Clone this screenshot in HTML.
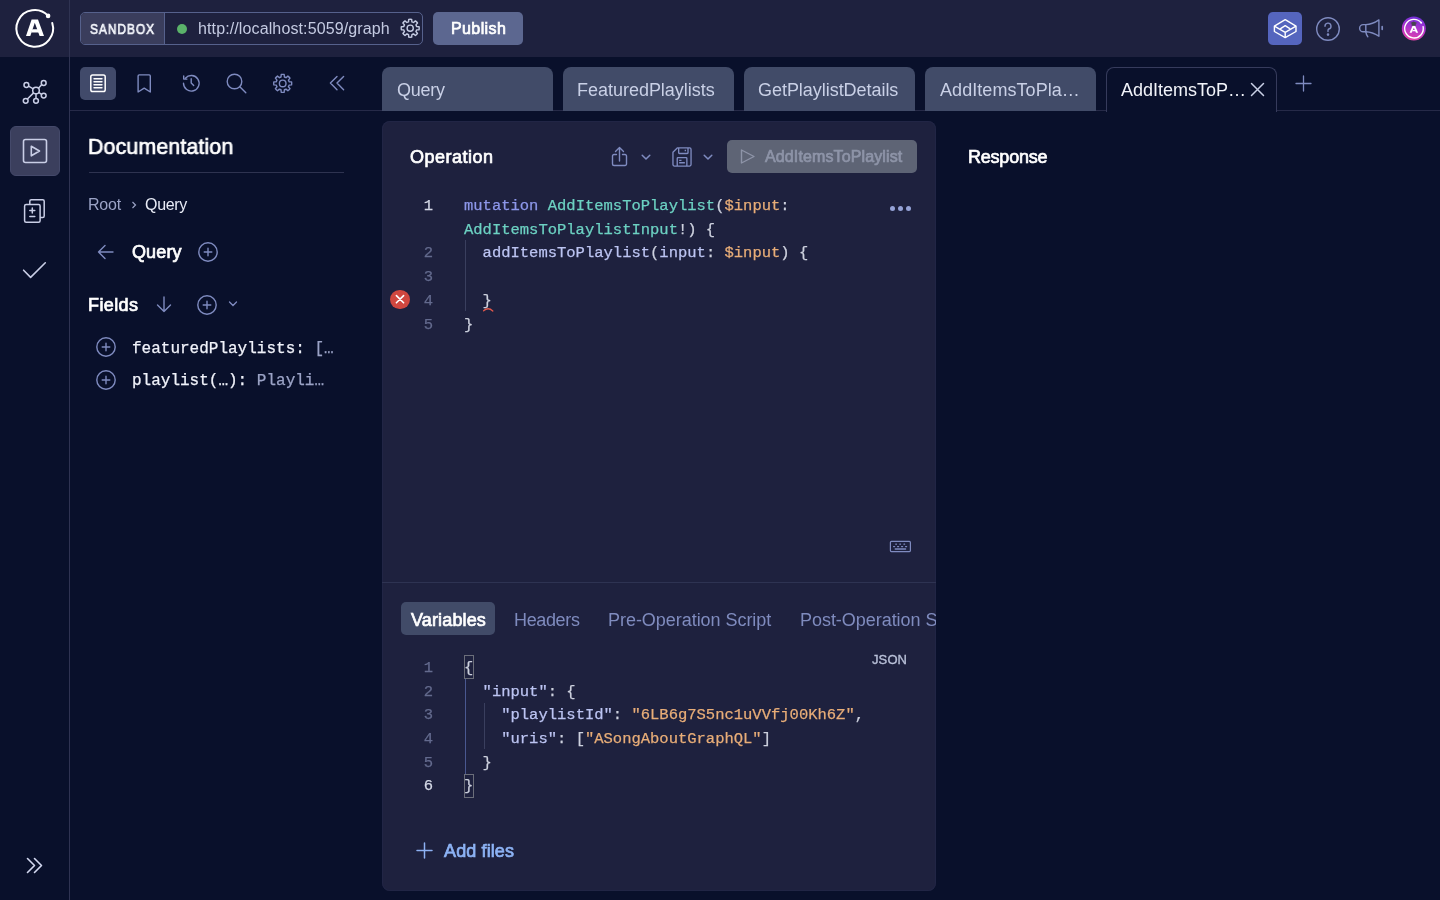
<!DOCTYPE html>
<html><head><meta charset="utf-8">
<style>
*{box-sizing:border-box;margin:0;padding:0}
html,body{width:1440px;height:900px;overflow:hidden;background:#09102B;font-family:"Liberation Sans",sans-serif}
.a{position:absolute}
.t{position:absolute;white-space:pre;line-height:0}
.m{font-family:"Liberation Mono",monospace}
.b{font-weight:normal;-webkit-text-stroke:0.7px currentColor}
svg{position:absolute;overflow:visible}
.t{will-change:transform}
.m{-webkit-text-stroke:0.25px currentColor}
</style></head><body>

<!-- top bar -->
<div class="a" style="left:0;top:0;width:1440px;height:57px;background:#1E213E"></div>
<!-- rail border -->
<div class="a" style="left:69px;top:0;width:1px;height:900px;background:#2F3352"></div>
<!-- secondary line -->
<div class="a" style="left:70px;top:110px;width:1370px;height:1px;background:#262A48"></div>

<!-- logo -->
<svg style="left:0;top:0" width="70" height="57" viewBox="0 0 70 57">
  <path d="M52.25 23.05 A18.3 18.3 0 1 1 48.13 15.92" fill="none" stroke="#fff" stroke-width="2" stroke-linecap="round"/>
  <circle cx="48.1" cy="15.9" r="2.3" fill="#fff"/>
  <path d="M26 36 L31.6 19.5 L38 19.5 L44 36 L39.6 36 L34.8 22.8 L30.3 36 Z" fill="#fff"/>
  <path d="M31.2 32.5 L40.3 32.5 L39.2 29.3 L32.3 29.3 Z" fill="#fff"/>
</svg>
<!-- url group -->
<div class="a" style="left:80px;top:12px;width:343px;height:33px;border:1px solid #56618C;border-radius:5px"></div>
<div class="a" style="left:81px;top:13px;width:84px;height:31px;background:#3A3D5C;border-right:1px solid #56618C;border-radius:4px 0 0 4px"></div>
<div class="t b" style="left:89.9px;top:29.3px;font-size:14px;letter-spacing:1.15px;transform:scaleX(0.85);transform-origin:0 0;color:#F2F4FA">SANDBOX</div>
<div class="a" style="left:177px;top:23.5px;width:10px;height:10px;border-radius:50%;background:#5BB36A"></div>
<div class="t" style="left:198.1px;top:28.7px;font-size:16px;letter-spacing:0.12px;color:#C5CBE2">http://localhost:5059/graph</div>
<!-- url gear -->
<svg style="left:398px;top:16px" width="25" height="25" viewBox="398 16 25 25" fill="none" stroke="#C5CBE2" stroke-width="1.4" stroke-linejoin="round">
  <path d="M408.51 21.82 L408.72 19.32 A9.0 9.0 0 0 1 411.68 19.32 L411.89 21.82 A6.6 6.6 0 0 1 413.51 22.49 L415.43 20.88 A9.0 9.0 0 0 1 417.52 22.97 L415.91 24.89 A6.6 6.6 0 0 1 416.58 26.51 L419.08 26.72 A9.0 9.0 0 0 1 419.08 29.68 L416.58 29.89 A6.6 6.6 0 0 1 415.91 31.51 L417.52 33.43 A9.0 9.0 0 0 1 415.43 35.52 L413.51 33.91 A6.6 6.6 0 0 1 411.89 34.58 L411.68 37.08 A9.0 9.0 0 0 1 408.72 37.08 L408.51 34.58 A6.6 6.6 0 0 1 406.89 33.91 L404.97 35.52 A9.0 9.0 0 0 1 402.88 33.43 L404.49 31.51 A6.6 6.6 0 0 1 403.82 29.89 L401.32 29.68 A9.0 9.0 0 0 1 401.32 26.72 L403.82 26.51 A6.6 6.6 0 0 1 404.49 24.89 L402.88 22.97 A9.0 9.0 0 0 1 404.97 20.88 L406.89 22.49 A6.6 6.6 0 0 1 408.51 21.82Z"/>
  <circle cx="410.2" cy="28.2" r="3.1"/>
</svg>
<!-- publish -->
<div class="a" style="left:433px;top:12px;width:90px;height:33px;border-radius:5px;background:#5C6790"></div>
<div class="t b" style="left:450.6px;top:28.7px;font-size:16px;letter-spacing:0.40px;color:#FFFFFF">Publish</div>


<!-- right icons -->
<div class="a" style="left:1268px;top:12px;width:34px;height:33px;border-radius:5px;background:#5565BE"></div>
<svg style="left:1266px;top:10px" width="40" height="38" viewBox="0 0 40 38" fill="none" stroke="#fff" stroke-width="1.4" stroke-linejoin="round">
  <path d="M8.4 16.2 L19.2 9.7 L30 16.2 L30 21.5 L19.2 27.6 L8.4 21.5 Z"/>
  <path d="M8.4 16.2 L19.2 22.4 L30 16.2 M19.2 22.4 V27.6"/>
  <path d="M14.2 18.8 L19.2 15.6 L24.2 18.8"/>
</svg>
<svg style="left:1316px;top:16.5px" width="24" height="24" viewBox="0 0 24 24" fill="none" stroke="#7F8BC0" stroke-width="1.4" stroke-linecap="round">
  <circle cx="12" cy="12" r="11.3"/>
  <path d="M9 9.2 A3 3 0 1 1 12.8 12 C12.2 12.3 12 12.8 12 13.6 V14.5"/>
  <circle cx="12" cy="17.6" r="0.6" fill="#7F8BC0"/>
</svg>
<svg style="left:1350px;top:10px" width="40" height="38" viewBox="1350 10 40 38" fill="none" stroke="#7F8BC0" stroke-width="1.4" stroke-linejoin="round" stroke-linecap="round">
  <path d="M1365.8 24.6 H1363.2 A3.55 3.55 0 0 0 1363.2 31.7 H1365.8 Z"/>
  <path d="M1365.8 24.6 C1371 24.4 1375 22.6 1378.9 19.9 V36.2 C1375 33.6 1371 31.9 1365.8 31.7"/>
  <path d="M1365.8 31.7 Q1366.2 35 1367.8 36.7"/>
  <path d="M1382.2 26.7 V29.3" stroke-width="1.7"/>
</svg>
<svg style="left:1400px;top:15px" width="28" height="28" viewBox="1400 15 28 28">
  <defs><linearGradient id="av" x1="0.6" y1="0" x2="0.4" y2="1"><stop offset="0" stop-color="#7030D8"/><stop offset="0.5" stop-color="#B034CC"/><stop offset="1" stop-color="#E444A8"/></linearGradient></defs>
  <circle cx="1413.8" cy="28.5" r="12" fill="url(#av)"/>
  <path d="M1422.97 26.18 A9.3 9.3 0 1 1 1421.18 22.73" fill="none" stroke="#fff" stroke-width="1.4"/>
  <circle cx="1421.2" cy="22.7" r="1" fill="#fff"/>
  <path d="M1409.6 32.7 L1412.6 25.8 L1415.1 25.8 L1418.1 32.7 L1416 32.7 L1413.85 27.7 L1411.7 32.7 Z" fill="#fff"/>
  <path d="M1412.3 31.3 L1416.1 31.3 L1415.6 30 L1412.8 30Z" fill="#fff"/>
  <path d="M1410.1 23 L1413.7 21.4 L1417.2 23 L1413.7 24.6 Z M1411.6 23.6 H1415.8 V25.8 H1411.6 Z" fill="#46444E"/>
</svg>

<!-- secondary toolbar -->
<div class="a" style="left:80px;top:67px;width:36px;height:33px;border-radius:5px;background:#414A6A"></div>
<svg style="left:85px;top:70px" width="26" height="26" viewBox="85 70 26 26" fill="none" stroke="#fff" stroke-width="1.5" stroke-linecap="round">
  <rect x="90.8" y="74.9" width="14.4" height="16.6" rx="1.8"/>
  <path d="M94 78.7 H102 M94 81.7 H102 M94 84.7 H102 M94 87.7 H102" stroke-width="1.4"/>
</svg>
<svg style="left:132px;top:70px" width="24" height="26" viewBox="132 70 24 26" fill="none" stroke="#7F8BC0" stroke-width="1.4" stroke-linejoin="round">
  <path d="M138.1 76 Q138.1 74.9 139.2 74.9 H149.2 Q150.3 74.9 150.3 76 V92 L144.2 88.2 L138.1 92 Z"/>
</svg>
<svg style="left:178px;top:70px" width="26" height="26" viewBox="178 70 26 26" fill="none" stroke="#7F8BC0" stroke-width="1.4" stroke-linecap="round" stroke-linejoin="round">
  <path d="M183.5 83.3 A7.8 7.8 0 1 0 185.4 78.2"/>
  <path d="M183.7 75.9 V79.1 H186.9"/>
  <path d="M191.2 78.8 V83 L193.7 85.5"/>
</svg>
<svg style="left:226px;top:73px" width="21" height="21" viewBox="0 0 21 21" fill="none" stroke="#7F8BC0" stroke-width="1.4" stroke-linecap="round">
  <circle cx="8.5" cy="8.5" r="7.3"/>
  <path d="M13.8 13.8 L19.8 19.8"/>
</svg>
<svg style="left:270px;top:71px" width="25" height="25" viewBox="270 71 25 25" fill="none" stroke="#7F8BC0" stroke-width="1.4" stroke-linejoin="round">
  <path d="M281.01 77.02 L281.22 74.52 A9.0 9.0 0 0 1 284.18 74.52 L284.39 77.02 A6.6 6.6 0 0 1 286.01 77.69 L287.93 76.08 A9.0 9.0 0 0 1 290.02 78.17 L288.41 80.09 A6.6 6.6 0 0 1 289.08 81.71 L291.58 81.92 A9.0 9.0 0 0 1 291.58 84.88 L289.08 85.09 A6.6 6.6 0 0 1 288.41 86.71 L290.02 88.63 A9.0 9.0 0 0 1 287.93 90.72 L286.01 89.11 A6.6 6.6 0 0 1 284.39 89.78 L284.18 92.28 A9.0 9.0 0 0 1 281.22 92.28 L281.01 89.78 A6.6 6.6 0 0 1 279.39 89.11 L277.47 90.72 A9.0 9.0 0 0 1 275.38 88.63 L276.99 86.71 A6.6 6.6 0 0 1 276.32 85.09 L273.82 84.88 A9.0 9.0 0 0 1 273.82 81.92 L276.32 81.71 A6.6 6.6 0 0 1 276.99 80.09 L275.38 78.17 A9.0 9.0 0 0 1 277.47 76.08 L279.39 77.69 A6.6 6.6 0 0 1 281.01 77.02Z"/>
  <circle cx="282.7" cy="83.4" r="3.3"/>
</svg>
<svg style="left:325px;top:72px" width="22" height="22" viewBox="325 72 22 22" fill="none" stroke="#7F8BC0" stroke-width="1.4" stroke-linecap="round" stroke-linejoin="round">
  <path d="M337 76.4 L330.4 83.1 L337 89.8 M343.6 76.4 L337 83.1 L343.6 89.8"/>
</svg>

<!-- rail -->
<svg style="left:22px;top:79px" width="27" height="27" viewBox="0 0 27 27" fill="none" stroke="#C9CEE6" stroke-width="1.5">
  <circle cx="14" cy="11.5" r="3.3"/>
  <circle cx="4.4" cy="6" r="2.4"/><circle cx="21.7" cy="4" r="2.4"/><circle cx="21.7" cy="16.6" r="2.4"/>
  <circle cx="3.7" cy="21.8" r="2.4"/><circle cx="14" cy="21.8" r="2.4"/>
  <path d="M6.5 7.2 L11.3 9.8 M19.8 5.6 L16.5 9.3 M19.6 15.5 L16.8 13.3 M5.4 20 L11.6 13.9 M14 14.8 V19.4"/>
</svg>
<div class="a" style="left:10px;top:126px;width:50px;height:50px;border-radius:6px;background:#3B3F5D;border:1px solid #44496A"></div>
<svg style="left:22px;top:138px" width="26" height="26" viewBox="0 0 26 26" fill="none" stroke="#C9CEE6" stroke-width="1.6" stroke-linejoin="round">
  <rect x="1.5" y="1.5" width="23" height="23" rx="2"/>
  <path d="M9.3 8.2 L17.5 13 L9.3 17.8 Z"/>
</svg>
<svg style="left:15px;top:190px" width="40" height="40" viewBox="15 190 40 40" fill="none" stroke="#C9CEE6" stroke-width="1.5" stroke-linejoin="round" stroke-linecap="round">
  <rect x="29.8" y="199.7" width="14.4" height="17.9" rx="1.5"/>
  <rect x="24.6" y="204.4" width="15.5" height="17.8" rx="1.5" fill="#09102B"/>
  <path d="M32.3 208 V213 M29.8 210.5 H34.8 M29.8 216.4 H34.8"/>
</svg>
<svg style="left:15px;top:255px" width="40" height="30" viewBox="15 255 40 30" fill="none" stroke="#C9CEE6" stroke-width="1.6" stroke-linecap="round" stroke-linejoin="round">
  <path d="M23.6 270.2 L30.6 277.4 L45.3 262.8"/>
</svg>
<svg style="left:26px;top:857px" width="17" height="17" viewBox="0 0 17 17" fill="none" stroke="#D3D8F0" stroke-width="1.6" stroke-linecap="round" stroke-linejoin="round">
  <path d="M1.5 1.5 L8.5 8.5 L1.5 15.5"/><path d="M8.5 1.5 L15.5 8.5 L8.5 15.5"/>
</svg>

<!-- documentation panel -->
<div class="t b" style="left:87.6px;top:146.6px;font-size:22px;letter-spacing:0.14px;transform:scaleX(0.97);transform-origin:0 0;color:#FFFFFF">Documentation</div>
<div class="a" style="left:89px;top:172px;width:255px;height:1px;background:#2E3350"></div>
<div class="t" style="left:88px;top:204.5px;font-size:16px;letter-spacing:-0.18px;color:#9BA3C6">Root</div>
<svg style="left:131px;top:201px" width="6" height="8" viewBox="0 0 6 8" fill="none" stroke="#9BA3C6" stroke-width="1.2"><path d="M1.5 1 L4.5 4 L1.5 7"/></svg>
<div class="t" style="left:145.3px;top:204.5px;font-size:16px;letter-spacing:-0.32px;color:#E8EBF6">Query</div>
<svg style="left:97px;top:244px" width="17" height="16" viewBox="0 0 17 16" fill="none" stroke="#7F8BC0" stroke-width="1.4" stroke-linecap="round" stroke-linejoin="round">
  <path d="M16 8 H1.5 M8 1.5 L1.5 8 L8 14.5"/>
</svg>
<div class="t b" style="left:131.7px;top:252.0px;font-size:18px;letter-spacing:0.12px;color:#FFFFFF">Query</div>
<svg style="left:198px;top:242px" width="20" height="20" viewBox="0 0 20 20" fill="none" stroke="#7F8BC0" stroke-width="1.4" stroke-linecap="round">
  <circle cx="10" cy="10" r="9.2"/><path d="M10 6.2 V13.8 M6.2 10 H13.8"/>
</svg>
<div class="t b" style="left:88.1px;top:304.5px;font-size:18px;letter-spacing:0.38px;color:#FFFFFF">Fields</div>
<svg style="left:156px;top:296px" width="16" height="17" viewBox="0 0 16 17" fill="none" stroke="#7F8BC0" stroke-width="1.4" stroke-linecap="round" stroke-linejoin="round">
  <path d="M8 1 V15.5 M1.5 9 L8 15.5 L14.5 9"/>
</svg>
<svg style="left:196.5px;top:294.5px" width="20" height="20" viewBox="0 0 20 20" fill="none" stroke="#7F8BC0" stroke-width="1.4" stroke-linecap="round">
  <circle cx="10" cy="10" r="9.2"/><path d="M10 6.2 V13.8 M6.2 10 H13.8"/>
</svg>
<svg style="left:228px;top:301px" width="10" height="6" viewBox="0 0 10 6" fill="none" stroke="#7F8BC0" stroke-width="1.3" stroke-linecap="round"><path d="M1.5 1 L5 4.5 L8.5 1"/></svg>
<svg style="left:95.5px;top:336.5px" width="20" height="20" viewBox="0 0 20 20" fill="none" stroke="#7F8BC0" stroke-width="1.4" stroke-linecap="round">
  <circle cx="10" cy="10" r="9.2"/><path d="M10 6.2 V13.8 M6.2 10 H13.8"/>
</svg>
<svg style="left:95.5px;top:370px" width="20" height="20" viewBox="0 0 20 20" fill="none" stroke="#7F8BC0" stroke-width="1.4" stroke-linecap="round">
  <circle cx="10" cy="10" r="9.2"/><path d="M10 6.2 V13.8 M6.2 10 H13.8"/>
</svg>
<div class="t m" style="left:132px;top:348.7px;font-size:16px;color:#F0F2FA">featuredPlaylists: <span style="color:#9BA3C6">[…</span></div>
<div class="t m" style="left:132px;top:381.3px;font-size:16px;color:#F0F2FA">playlist(…): <span style="color:#9BA3C6">Playli…</span></div>


<!-- tabs -->
<div class="a" style="left:382px;top:67px;width:171px;height:44px;border-radius:8px 8px 0 0;background:#414B68"></div>
<div class="a" style="left:563px;top:67px;width:171px;height:44px;border-radius:8px 8px 0 0;background:#414B68"></div>
<div class="a" style="left:744px;top:67px;width:171px;height:44px;border-radius:8px 8px 0 0;background:#414B68"></div>
<div class="a" style="left:925px;top:67px;width:171px;height:44px;border-radius:8px 8px 0 0;background:#414B68"></div>
<div class="a" style="left:1106px;top:67px;width:171px;height:45px;border-radius:8px 8px 0 0;background:#09102B;border:1px solid #363B5C;border-bottom:none"></div>
<div class="t" style="left:397.1px;top:89.6px;font-size:18px;letter-spacing:-0.28px;color:#C9D0E6">Query</div>
<div class="t" style="left:577.3px;top:89.6px;font-size:18px;letter-spacing:-0.02px;color:#C9D0E6">FeaturedPlaylists</div>
<div class="t" style="left:758.4px;top:89.6px;font-size:18px;letter-spacing:-0.04px;color:#C9D0E6">GetPlaylistDetails</div>
<div class="t" style="left:940.3px;top:89.6px;font-size:18px;letter-spacing:0.06px;color:#C9D0E6">AddItemsToPla…</div>
<div class="t" style="left:1120.8px;top:89.6px;font-size:18px;letter-spacing:-0.01px;color:#F2F4FA">AddItemsToP…</div>
<svg style="left:1250px;top:82px" width="15" height="15" viewBox="0 0 15 15" fill="none" stroke="#C9D0E6" stroke-width="1.5" stroke-linecap="round">
  <path d="M1.5 1.5 L13.5 13.5 M13.5 1.5 L1.5 13.5"/>
</svg>
<svg style="left:1295px;top:75px" width="17" height="17" viewBox="0 0 17 17" fill="none" stroke="#7F8BC0" stroke-width="1.3" stroke-linecap="round">
  <path d="M8.5 1 V16 M1 8.5 H16"/>
</svg>

<!-- response -->
<div class="t b" style="left:968.4px;top:157.1px;font-size:18px;letter-spacing:-0.22px;color:#FFFFFF">Response</div>

<!-- operation panel -->
<div class="a" style="left:382px;top:121px;width:554px;height:770px;border-radius:8px;background:#1E213E;overflow:hidden;box-shadow:inset 0 0 0 1px #212545">
  <div class="a" style="left:0;top:461px;width:554px;height:1px;background:#2E3352"></div>
</div>
<div class="t b" style="left:410.0px;top:157.1px;font-size:18px;letter-spacing:0.51px;color:#FFFFFF">Operation</div>
<!-- share -->
<svg style="left:611px;top:146px" width="17" height="21" viewBox="0 0 17 21" fill="none" stroke="#7F8BC0" stroke-width="1.4" stroke-linecap="round" stroke-linejoin="round">
  <path d="M8.5 15 V1.5 M4.5 5.5 L8.5 1.5 L12.5 5.5"/>
  <path d="M5.5 8.5 H3 A1.5 1.5 0 0 0 1.5 10 V18 A1.5 1.5 0 0 0 3 19.5 H14 A1.5 1.5 0 0 0 15.5 18 V10 A1.5 1.5 0 0 0 14 8.5 H11.5"/>
</svg>
<svg style="left:640.5px;top:153.5px" width="10" height="7" viewBox="0 0 10 7" fill="none" stroke="#7F8BC0" stroke-width="1.5" stroke-linecap="round" stroke-linejoin="round"><path d="M1.2 1.2 L5 5 L8.8 1.2"/></svg>
<!-- save -->
<svg style="left:671.5px;top:146.5px" width="20" height="20" viewBox="0 0 21 21" fill="none" stroke="#7F8BC0" stroke-width="1.4" stroke-linejoin="round">
  <path d="M5.5 1 H18.5 A1.5 1.5 0 0 1 20 2.5 V18.5 A1.5 1.5 0 0 1 18.5 20 H2.5 A1.5 1.5 0 0 1 1 18.5 V5.5 Z"/>
  <path d="M7 1 V6 A0.8 0.8 0 0 0 7.8 6.8 H16 A0.8 0.8 0 0 0 16.8 6 V1"/>
  <path d="M5.5 20 V12 A0.8 0.8 0 0 1 6.3 11.2 H14.8 A0.8 0.8 0 0 1 15.6 12 V20"/>
  <path d="M14 3 V4.5 M7.5 14 H10 M7.5 16.5 H13.5"/>
</svg>
<svg style="left:702.5px;top:153.5px" width="10" height="7" viewBox="0 0 10 7" fill="none" stroke="#7F8BC0" stroke-width="1.5" stroke-linecap="round" stroke-linejoin="round"><path d="M1.2 1.2 L5 5 L8.8 1.2"/></svg>
<!-- run -->
<div class="a" style="left:727px;top:140px;width:190px;height:33px;border-radius:5px;background:#5E6475"></div>
<svg style="left:740px;top:149px" width="16" height="15" viewBox="0 0 16 15" fill="none" stroke="#8E94A8" stroke-width="1.4" stroke-linejoin="round"><path d="M1.5 1 L14 7.5 L1.5 14 Z"/></svg>
<div class="t b" style="left:765.0px;top:156.9px;font-size:16px;letter-spacing:0.12px;color:#8E94A8">AddItemsToPlaylist</div>

<!-- code -->
<div class="a" style="left:465px;top:240px;width:1px;height:71px;background:#3A3F5E"></div>
<div class="t m" style="left:412.5px;top:205.9px;width:20px;text-align:right;font-size:15.5px;color:#D4D8E6">1</div>
<div class="t m" style="left:412.5px;top:253.4px;width:20px;text-align:right;font-size:15.5px;color:#646B8E">2</div>
<div class="t m" style="left:412.5px;top:277.1px;width:20px;text-align:right;font-size:15.5px;color:#646B8E">3</div>
<div class="t m" style="left:412.5px;top:300.8px;width:20px;text-align:right;font-size:15.5px;color:#646B8E">4</div>
<div class="t m" style="left:412.5px;top:324.5px;width:20px;text-align:right;font-size:15.5px;color:#646B8E">5</div>
<div class="t m" style="left:464px;top:205.9px;font-size:15.5px;color:#CDD1DE"><span style="color:#8D97EA">mutation</span> <span style="color:#6CD1C2">AddItemsToPlaylist</span>(<span style="color:#E8AD78">$input</span>:</div>
<div class="t m" style="left:464px;top:229.6px;font-size:15.5px;color:#CDD1DE"><span style="color:#6CD1C2">AddItemsToPlaylistInput</span>!) {</div>
<div class="t m" style="left:464px;top:253.4px;font-size:15.5px;color:#CDD1DE">  <span style="color:#BCC4F2">addItemsToPlaylist</span>(<span style="color:#BCC4F2">input</span>: <span style="color:#E8AD78">$input</span>) {</div>
<div class="t m" style="left:464px;top:300.8px;font-size:15.5px;color:#CDD1DE;white-space:pre">  }</div>
<div class="t m" style="left:464px;top:324.5px;font-size:15.5px;color:#CDD1DE">}</div>
<svg style="left:480px;top:304px" width="16" height="10" viewBox="480 304 16 10" fill="none" stroke="#E0584C" stroke-width="1.3" stroke-linecap="round" stroke-linejoin="round"><path d="M483.6 310.8 Q488.2 306.6 492.8 311"/></svg>
<div class="a" style="left:390.2px;top:289.5px;width:19.6px;height:19.6px;border-radius:50%;background:#D0473F"></div>
<svg style="left:390px;top:289px" width="20" height="20" viewBox="390 289 20 20" fill="none" stroke="#fff" stroke-width="1.6" stroke-linecap="round"><path d="M396.4 295.6 L403.6 302.8 M403.6 295.6 L396.4 302.8"/></svg>
<div class="a" style="left:889.5px;top:206.2px;width:5px;height:5px;border-radius:50%;background:#95A2D6"></div>
<div class="a" style="left:897.7px;top:206.2px;width:5px;height:5px;border-radius:50%;background:#95A2D6"></div>
<div class="a" style="left:906px;top:206.2px;width:5px;height:5px;border-radius:50%;background:#95A2D6"></div>
<svg style="left:885px;top:535px" width="30" height="22" viewBox="885 535 30 22" fill="none" stroke="#7F8BC0" stroke-width="1.2" stroke-linecap="round">
  <rect x="890.4" y="541.4" width="20" height="10.2" rx="1"/>
  <path d="M895.8 544.2 H896.4 M899.9 544.2 H900.5 M904 544.2 H904.6 M893.6 546.6 H894.6 M897.6 546.6 H898.6 M901.6 546.6 H902.6 M905.6 546.6 H906.6 M895.2 549 H905.6" stroke-width="1.3"/>
</svg>

<!-- variables tabs -->
<div class="a" style="left:401px;top:602px;width:94px;height:33px;border-radius:5px;background:#414B68"></div>
<div class="t b" style="left:410.8px;top:619.6px;font-size:18px;letter-spacing:0.14px;color:#FFFFFF">Variables</div>
<div class="t" style="left:513.9px;top:619.6px;font-size:18px;letter-spacing:-0.36px;color:#7F8BBE">Headers</div>
<div class="t" style="left:608px;top:619.6px;font-size:18px;letter-spacing:-0.04px;color:#7F8BBE">Pre-Operation Script</div>
<div class="a" style="left:700px;top:600px;width:236px;height:40px;overflow:hidden">
  <div class="t" style="left:100px;top:19.6px;font-size:18px;letter-spacing:-0.04px;color:#7F8BBE">Post-Operation Script</div>
</div>
<div class="t" style="left:871.6px;top:660.3px;font-size:13px;letter-spacing:0.11px;color:#B9C0D8;-webkit-text-stroke:0.35px #B9C0D8">JSON</div>

<!-- json code -->
<div class="a" style="left:465px;top:679px;width:1px;height:95px;background:#4A5890"></div>
<div class="a" style="left:483.5px;top:703px;width:1px;height:46px;background:#3A3F5E"></div>
<div class="a" style="left:464px;top:655px;width:10px;height:24px;border:1px solid #6B6E7A"></div>
<div class="a" style="left:464px;top:774px;width:10px;height:24px;border:1px solid #6B6E7A"></div>
<div class="t m" style="left:412.5px;top:667.6px;width:20px;text-align:right;font-size:15.5px;color:#646B8E">1</div>
<div class="t m" style="left:412.5px;top:691.7px;width:20px;text-align:right;font-size:15.5px;color:#646B8E">2</div>
<div class="t m" style="left:412.5px;top:714.9px;width:20px;text-align:right;font-size:15.5px;color:#646B8E">3</div>
<div class="t m" style="left:412.5px;top:739.1px;width:20px;text-align:right;font-size:15.5px;color:#646B8E">4</div>
<div class="t m" style="left:412.5px;top:763.2px;width:20px;text-align:right;font-size:15.5px;color:#646B8E">5</div>
<div class="t m" style="left:412.5px;top:786.4px;width:20px;text-align:right;font-size:15.5px;color:#D4D8E6">6</div>
<div class="t m" style="left:464px;top:667.6px;font-size:15.5px;color:#CDD1DE">{</div>
<div class="t m" style="left:464px;top:691.7px;font-size:15.5px;color:#CDD1DE;white-space:pre">  <span style="color:#BCC4F2">"input"</span>: {</div>
<div class="t m" style="left:464px;top:714.9px;font-size:15.5px;color:#CDD1DE;white-space:pre">    <span style="color:#BCC4F2">"playlistId"</span>: <span style="color:#E8AD78">"6LB6g7S5nc1uVVfj00Kh6Z"</span>,</div>
<div class="t m" style="left:464px;top:739.1px;font-size:15.5px;color:#CDD1DE;white-space:pre">    <span style="color:#BCC4F2">"uris"</span>: [<span style="color:#E8AD78">"ASongAboutGraphQL"</span>]</div>
<div class="t m" style="left:464px;top:763.2px;font-size:15.5px;color:#CDD1DE;white-space:pre">  }</div>
<div class="t m" style="left:464px;top:786.4px;font-size:15.5px;color:#CDD1DE">}</div>

<!-- add files -->
<svg style="left:416px;top:842px" width="17" height="17" viewBox="0 0 17 17" fill="none" stroke="#8DB1F2" stroke-width="1.5" stroke-linecap="round"><path d="M8.5 1 V16 M1 8.5 H16"/></svg>
<div class="t b" style="left:443.9px;top:850.5px;font-size:18px;letter-spacing:0.12px;color:#8DB3F5">Add files</div>

</body></html>
